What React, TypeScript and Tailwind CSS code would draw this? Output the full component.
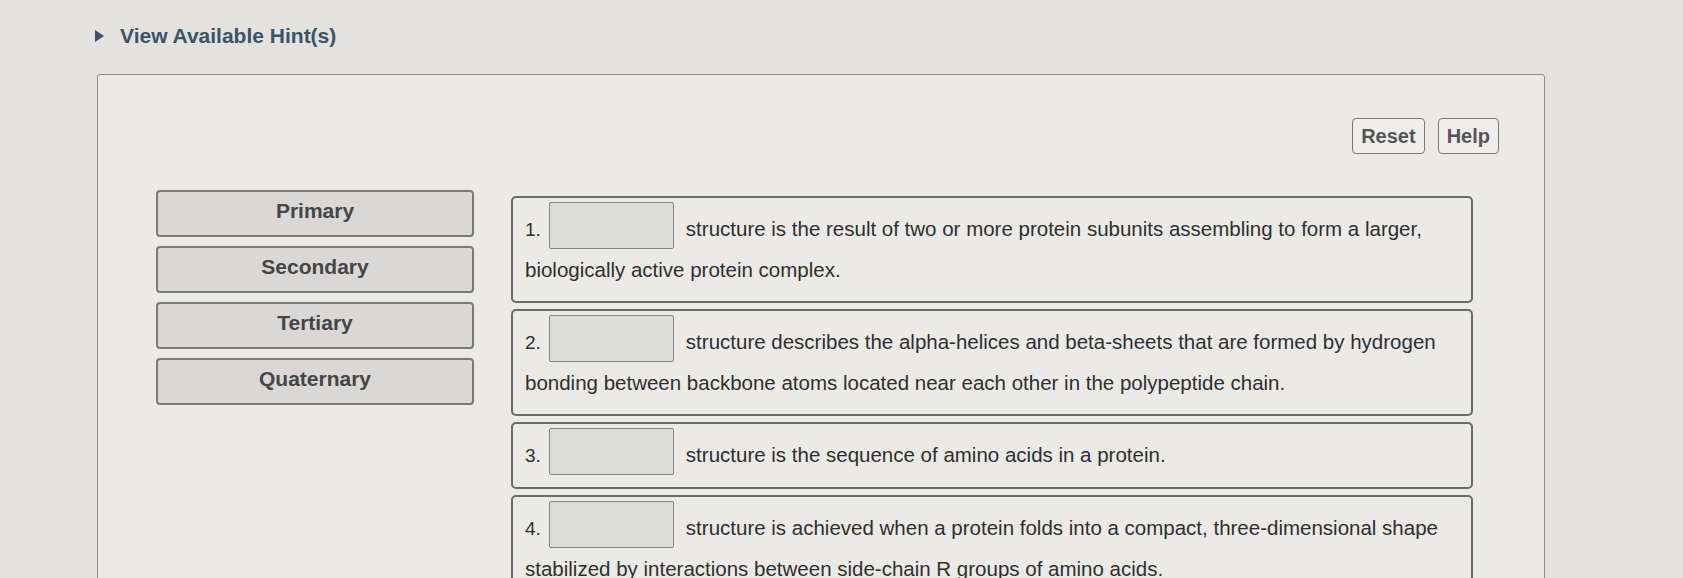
const terms = ["Primary", "Secondary", "Tertiary", "Quaternary"];

const statements = [
  "structure is the result of two or more protein subunits assembling to form a larger, biologically active protein complex.",
  "structure describes the alpha-helices and beta-sheets that are formed by hydrogen bonding between backbone atoms located near each other in the polypeptide chain.",
  "structure is the sequence of amino acids in a protein.",
  "structure is achieved when a protein folds into a compact, three-dimensional shape stabilized by interactions between side-chain R groups of amino acids.",
];

const App = () => {
  return (
    <div className="h-[578px] w-full overflow-hidden bg-[#e3e2df] font-['Liberation_Sans',Arial,sans-serif] text-[#2f2f2f]">
      {/* Hints toggle */}
      <div className="flex items-center pl-[94px] pt-[20px]">
        <svg width="11" height="14" viewBox="0 0 11 14" className="mr-[15px]">
          <path d="M1 1 L10 7 L1 13 Z" fill="#3b5368" />
        </svg>
        <span className="text-[21px] font-bold text-[#3b5368]">View Available Hint(s)</span>
      </div>

      {/* Ranking panel */}
      <div className="ml-[97px] mt-[22px] h-[560px] w-[1448px] rounded-[3px] border border-[#8d8d8b] bg-[#ebeae7]">
        <div className="flex justify-end gap-[13px] pr-[45px] pt-[43px]">
          <button className="h-[36px] rounded-[4px] border-[1.5px] border-[#7a7a7a] bg-[#efeeec] px-[8px] text-[20px] font-bold text-[#555]">
            Reset
          </button>
          <button className="h-[36px] rounded-[4px] border-[1.5px] border-[#7a7a7a] bg-[#efeeec] px-[8px] text-[20px] font-bold text-[#555]">
            Help
          </button>
        </div>

        <div className="mt-[36px] flex pl-[58px]">
          {/* Draggable terms */}
          <div className="flex w-[318px] flex-col gap-[9px]">
            {terms.map((t) => (
              <div
                key={t}
                className="flex h-[47px] items-center justify-center rounded-[4px] border-2 border-[#7b7b7b] bg-[#d9d8d6] pb-[5px] text-[21px] font-bold text-[#454545]"
              >
                {t}
              </div>
            ))}
          </div>

          {/* Drop targets */}
          <div className="ml-[37px] mt-[6px] flex w-[962px] flex-col gap-[6px]">
            {statements.map((s, i) => (
              <div
                key={i}
                className="rounded-[5px] border-2 border-[#676b6f] bg-[#ebeae7] px-[12px] pb-[11px] pt-[4px] text-[20.5px] leading-[40px]"
              >
                <span className="mr-[8px] text-[19px]">{i + 1}.</span>
                <span className="mr-[12px] inline-block h-[47px] w-[125px] rounded-[2px] border-[1.5px] border-[#858585] bg-[#dcdcda] align-[-13px]" />
                {s}
              </div>
            ))}
          </div>
        </div>
      </div>
    </div>
  );
};

export default App;
